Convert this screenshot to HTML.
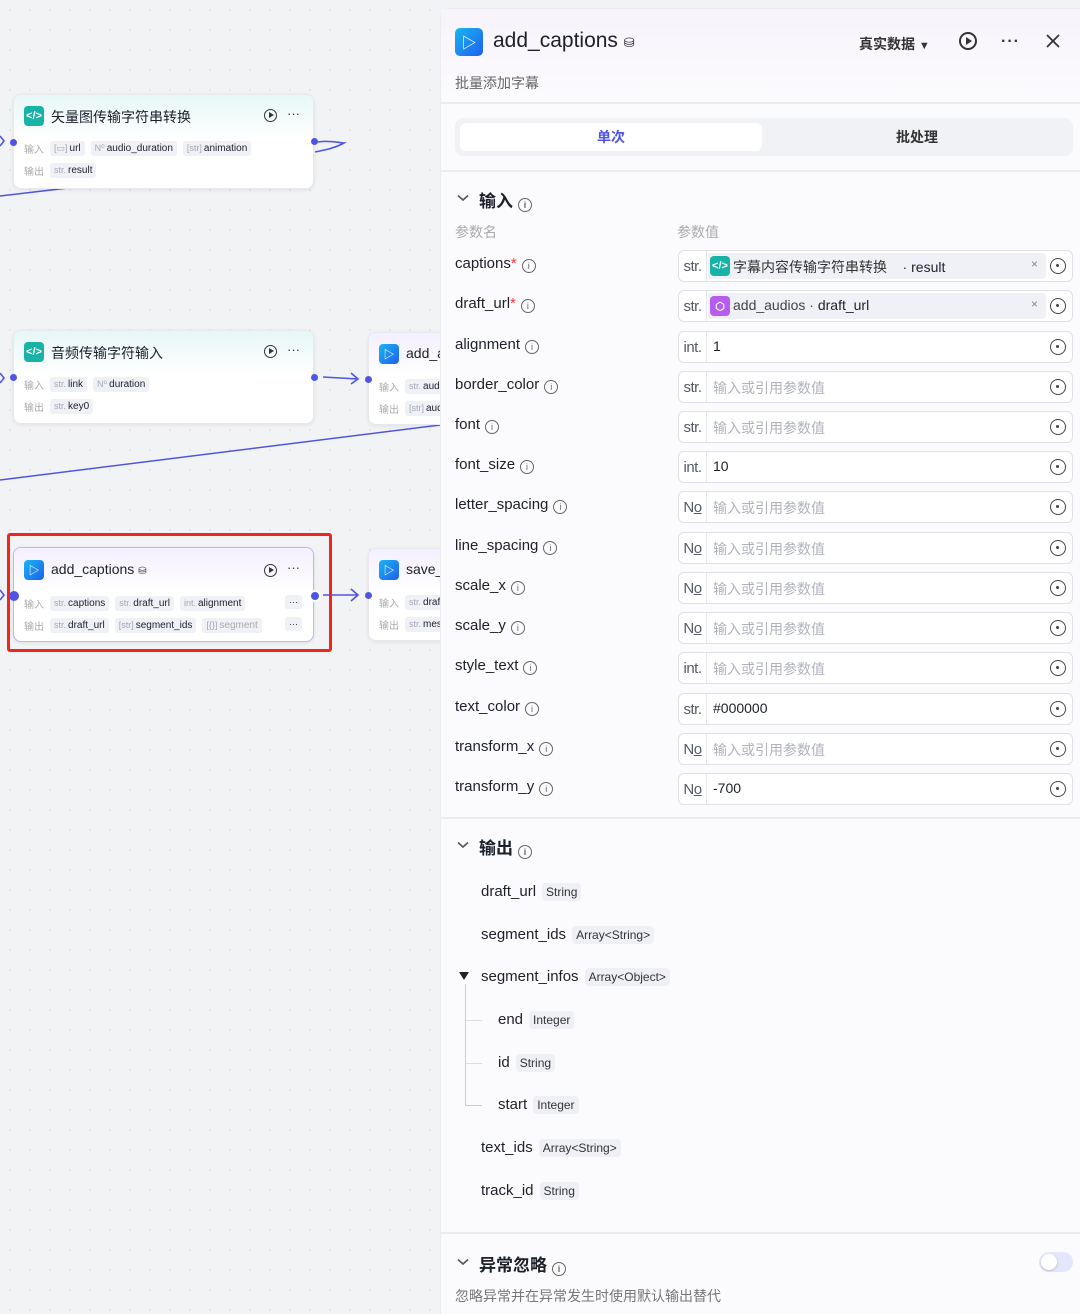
<!DOCTYPE html>
<html><head><meta charset="utf-8">
<style>
*{box-sizing:border-box;margin:0;padding:0}
body{width:1080px;height:1314px;overflow:hidden;position:relative;background:#f2f3f5;font-family:"Liberation Sans","Noto Sans CJK SC",sans-serif;color:#1d1f2b}
.cv{position:absolute;left:0;top:0;width:440px;height:1314px;background-color:#f2f3f5;background-image:radial-gradient(#e3e4e8 1px,transparent 1.2px);background-size:20px 20px}
.node{position:absolute;background:#fff;border-radius:8px;box-shadow:0 1px 4px rgba(0,0,0,.08);border:1px solid #e8e9ef;overflow:hidden}
.node .hd{height:44px;background:linear-gradient(180deg,#e6f7f6 0%,#fff 100%);position:relative}
.node.blue .hd{background:linear-gradient(180deg,#f4efff 0%,#fff 100%)}
.ic{position:absolute;width:20px;height:20px;border-radius:4px;display:flex;align-items:center;justify-content:center;color:#fff;font-size:11px;font-weight:bold}
.ic.g{background:#16b3a6}
.ic.b{background:linear-gradient(135deg,#19b6ef,#1f5ff0)}
.ttl{position:absolute;left:37px;top:12px;font-size:14px;color:#1d1f2b}
.r{position:absolute;font-size:10px;color:#aaa;display:flex;gap:6px;align-items:center}
.tag{background:#f0f1f6;border-radius:3px;padding:2px 4px;color:#1d1f2b;font-size:10px}
.tag i{font-style:normal;color:#a3a6b4;font-size:9px;margin-right:2px}
.pl{position:absolute;top:14px;width:13px;height:13px;border:1.5px solid #333;border-radius:50%}
.pl:after{content:"";position:absolute;left:3.5px;top:2px;border-left:5px solid #333;border-top:3.5px solid transparent;border-bottom:3.5px solid transparent}
.act{position:absolute;top:11px;font-size:13px;color:#333}
.dot{position:absolute;width:7px;height:7px;border-radius:50%;background:#4e55e6}
.panel{position:absolute;left:440px;top:8px;width:640px;height:1306px;background:#fbfbfd;border-radius:10px 0 0 0;border-left:1px solid #ebecf0;border-top:1px solid #ebecf0}
.pt{position:absolute;left:0;top:0;width:640px;height:95px;background:linear-gradient(180deg,#f8f3fc,#fbfbfd)}
.a{position:absolute}
.lbl{position:absolute;left:14px;font-size:15px;color:#1d1f2b}
.info{display:inline-block;width:14px;height:14px;border:1.2px solid #666;border-radius:50%;font-size:9px;line-height:12px;text-align:center;color:#666;vertical-align:-1px;margin-left:5px;font-style:normal}
.box{position:absolute;left:237px;width:395px;height:32px;border:1px solid #dfe0e8;border-radius:6px;background:#fff}
.box .t{position:absolute;left:0;top:0;width:28px;height:30px;border-right:1px solid #e6e7ee;font-size:15px;color:#555a66;display:flex;align-items:center;justify-content:center;letter-spacing:-.5px}
.box .v{position:absolute;left:34px;top:6px;font-size:14px;color:#1d1f2b}
.box .v.ph{color:#b0b3bd}
.box .tg{position:absolute;right:6px;top:7px;width:16px;height:16px;border:1.6px solid #444;border-radius:50%}
.box .tg:after{content:"";position:absolute;left:5px;top:5px;width:3px;height:3px;background:#444;border-radius:50%}
.ref{position:absolute;left:29px;top:2px;width:338px;height:26px;background:#f0f1f6;border-radius:4px}
.ol{position:absolute;font-size:15px;color:#1d1f2b}
.ol span{font-size:12px;background:#eef0f5;border-radius:4px;padding:2px 4px;margin-left:6px;color:#333}
.sep{position:absolute;left:0;width:640px;height:2px;background:#ebebf1}
.chev{position:absolute;left:16px}
</style></head><body>
<div class="cv"></div>
<svg class="a" style="left:0;top:0" width="440" height="700">
<g fill="none" stroke="#4e55e6" stroke-width="1.6">
<path d="M0 196 L68 188"/>
<path d="M318 142 C330 140 340 143 344 143 C335 148 325 150 315 152"/>
<path d="M0 480 L440 425"/>
<path d="M323 377 L358 379 M351 373 L358 379 L351 384"/>
<path d="M323 595 L358 595 M351 589 L358 595 L351 601"/>
<path d="M0 136 L4 141 L0 146 M0 373 L4 378 L0 383 M0 590 L4 595 L0 600"/>
</g></svg>
<!-- node1 -->
<div class="node" style="left:13px;top:94px;width:301px;height:95px">
<div class="hd"><div class="ic g" style="left:10px;top:11px">&lt;/&gt;</div><div class="ttl">矢量图传输字符串转换</div>
<div class="pl" style="left:250px"></div><div class="act" style="left:273px">···</div></div>
<div class="r" style="left:10px;top:46px">输入 <span class="tag"><i>[▭]</i>url</span><span class="tag"><i>N⁰</i>audio_duration</span><span class="tag"><i>[str]</i>animation</span></div>
<div class="r" style="left:10px;top:68px">输出 <span class="tag"><i>str.</i>result</span></div>
</div>
<div class="dot" style="left:10px;top:139px"></div><div class="dot" style="left:311px;top:138px"></div>
<!-- node2 -->
<div class="node" style="left:13px;top:330px;width:301px;height:94px">
<div class="hd"><div class="ic g" style="left:10px;top:11px">&lt;/&gt;</div><div class="ttl">音频传输字符输入</div>
<div class="pl" style="left:250px"></div><div class="act" style="left:273px">···</div></div>
<div class="r" style="left:10px;top:46px">输入 <span class="tag"><i>str.</i>link</span><span class="tag"><i>N⁰</i>duration</span></div>
<div class="r" style="left:10px;top:68px">输出 <span class="tag"><i>str.</i>key0</span></div>
</div>
<div class="dot" style="left:10px;top:374px"></div><div class="dot" style="left:311px;top:374px"></div>
<!-- node3 -->
<div class="node blue" style="left:368px;top:332px;width:90px;height:93px">
<div class="hd"><div class="ic b" style="left:10px;top:11px">▷</div><div class="ttl" style="top:12px">add_a</div></div>
<div class="r" style="left:10px;top:46px">输入 <span class="tag"><i>str.</i>aud</span></div>
<div class="r" style="left:10px;top:68px">输出 <span class="tag"><i>[str]</i>aud</span></div>
</div>
<div class="dot" style="left:365px;top:376px"></div>
<!-- node4 -->
<div style="position:absolute;left:7px;top:533px;width:325px;height:119px;border:3px solid #f0261e;border-radius:3px"></div>
<div class="node blue" style="left:13px;top:547px;width:301px;height:95px;border:1px solid #b5b8f5">
<div class="hd"><div class="ic b" style="left:10px;top:12px">▷</div><div class="ttl" style="top:13px">add_captions <span style="font-size:10px">⛁</span></div>
<div class="pl" style="left:250px;top:16px"></div><div class="act" style="left:273px;top:12px">···</div></div>
<div class="r" style="left:10px;top:48px">输入 <span class="tag"><i>str.</i>captions</span><span class="tag"><i>str.</i>draft_url</span><span class="tag"><i>int.</i>alignment</span></div>
<div class="r" style="left:10px;top:70px">输出 <span class="tag"><i>str.</i>draft_url</span><span class="tag"><i>[str]</i>segment_ids</span><span class="tag" style="color:#aaa"><i>[{}]</i>segment</span></div>
<div class="tag a" style="left:271px;top:47px;font-size:9px">···</div><div class="tag a" style="left:271px;top:69px;font-size:9px">···</div>
</div>
<div class="dot" style="left:9px;top:591px;width:10px;height:10px"></div><div class="dot" style="left:309px;top:590px;width:12px;height:12px;border:2px solid #fff"></div>
<!-- node5 -->
<div class="node blue" style="left:368px;top:548px;width:90px;height:93px">
<div class="hd"><div class="ic b" style="left:10px;top:11px">▷</div><div class="ttl" style="top:12px">save_</div></div>
<div class="r" style="left:10px;top:46px">输入 <span class="tag"><i>str.</i>draf</span></div>
<div class="r" style="left:10px;top:68px">输出 <span class="tag"><i>str.</i>mes</span></div>
</div>
<div class="dot" style="left:365px;top:592px"></div>

<div class="panel">
<div class="pt"></div>
<div class="ic b" style="left:14px;top:19px;width:28px;height:28px;border-radius:5px;font-size:15px">▷</div>
<div class="a" style="left:52px;top:20px;font-size:21px;color:#1d1f2b">add_captions <span style="font-size:13px">⛁</span></div>
<div class="a" style="left:418px;top:25px;font-size:14px;font-weight:bold;color:#333">真实数据 <span style="font-size:11px">▼</span></div>
<div class="a" style="left:518px;top:23px;width:18px;height:18px;border:2px solid #333;border-radius:50%"><div style="position:absolute;left:5px;top:3px;border-left:6px solid #333;border-top:4px solid transparent;border-bottom:4px solid transparent"></div></div>
<div class="a" style="left:560px;top:24px;font-size:16px;color:#333;letter-spacing:1px;font-weight:bold">···</div>
<svg class="a" style="left:605px;top:25px" width="14" height="14"><path d="M1 1L13 13M13 1L1 13" stroke="#333" stroke-width="1.8"/></svg>
<div class="a" style="left:14px;top:64px;font-size:14px;color:#666">批量添加字幕</div>
<div class="sep" style="top:93px"></div>
<div class="a" style="left:14px;top:109px;width:618px;height:38px;background:#f1f2f5;border-radius:8px"></div>
<div class="a" style="left:19px;top:114px;width:302px;height:28px;background:#fff;border-radius:6px;text-align:center;line-height:28px;font-size:14px;color:#4d53e8;font-weight:bold">单次</div>
<div class="a" style="left:324px;top:114px;width:304px;height:28px;text-align:center;line-height:28px;font-size:14px;color:#333;font-weight:bold">批处理</div>
<div class="sep" style="top:161px"></div>
<svg class="chev" style="top:185px" width="12" height="8"><path d="M1 1.5L6 6L11 1.5" fill="none" stroke="#555" stroke-width="1.6"/></svg>
<div class="a" style="left:38px;top:178px;font-size:17px;font-weight:bold">输入<i class="info">i</i></div>
<div class="a" style="left:14px;top:213px;font-size:14px;color:#aaa">参数名</div>
<div class="a" style="left:236px;top:213px;font-size:14px;color:#aaa">参数值</div>

<div class="lbl" style="top:246px">captions<span style="color:#f33">*</span><i class="info">i</i></div>
<div class="box" style="top:241px"><div class="t">str.</div><div class="ref"><div class="ic g" style="left:2px;top:3px">&lt;/&gt;</div><div class="a" style="left:25px;top:4px;font-size:14px;color:#333">字幕内容传输字符串转换 &nbsp;&nbsp;&nbsp;· <span style="color:#1d1f2b">result</span></div><div class="a" style="right:8px;top:4px;font-size:12px;color:#888">×</div></div><div class="tg"></div></div>
<div class="lbl" style="top:286px">draft_url<span style="color:#f33">*</span><i class="info">i</i></div>
<div class="box" style="top:281px"><div class="t">str.</div><div class="ref"><div class="ic" style="left:2px;top:3px;background:#b65cf0">⬡</div><div class="a" style="left:25px;top:4px;font-size:14px;color:#444">add_audios · <span style="color:#1d1f2b">draft_url</span></div><div class="a" style="right:8px;top:4px;font-size:12px;color:#888">×</div></div><div class="tg"></div></div>

<div class="lbl" style="top:327px">alignment<i class="info">i</i></div>
<div class="box" style="top:322px"><div class="t">int.</div><div class="v">1</div><div class="tg"></div></div>
<div class="lbl" style="top:367px">border_color<i class="info">i</i></div>
<div class="box" style="top:362px"><div class="t">str.</div><div class="v ph">输入或引用参数值</div><div class="tg"></div></div>
<div class="lbl" style="top:407px">font<i class="info">i</i></div>
<div class="box" style="top:402px"><div class="t">str.</div><div class="v ph">输入或引用参数值</div><div class="tg"></div></div>
<div class="lbl" style="top:447px">font_size<i class="info">i</i></div>
<div class="box" style="top:442px"><div class="t">int.</div><div class="v">10</div><div class="tg"></div></div>
<div class="lbl" style="top:487px">letter_spacing<i class="info">i</i></div>
<div class="box" style="top:482px"><div class="t">N<u>o</u></div><div class="v ph">输入或引用参数值</div><div class="tg"></div></div>
<div class="lbl" style="top:528px">line_spacing<i class="info">i</i></div>
<div class="box" style="top:523px"><div class="t">N<u>o</u></div><div class="v ph">输入或引用参数值</div><div class="tg"></div></div>
<div class="lbl" style="top:568px">scale_x<i class="info">i</i></div>
<div class="box" style="top:563px"><div class="t">N<u>o</u></div><div class="v ph">输入或引用参数值</div><div class="tg"></div></div>
<div class="lbl" style="top:608px">scale_y<i class="info">i</i></div>
<div class="box" style="top:603px"><div class="t">N<u>o</u></div><div class="v ph">输入或引用参数值</div><div class="tg"></div></div>
<div class="lbl" style="top:648px">style_text<i class="info">i</i></div>
<div class="box" style="top:643px"><div class="t">int.</div><div class="v ph">输入或引用参数值</div><div class="tg"></div></div>
<div class="lbl" style="top:689px">text_color<i class="info">i</i></div>
<div class="box" style="top:684px"><div class="t">str.</div><div class="v">#000000</div><div class="tg"></div></div>
<div class="lbl" style="top:729px">transform_x<i class="info">i</i></div>
<div class="box" style="top:724px"><div class="t">N<u>o</u></div><div class="v ph">输入或引用参数值</div><div class="tg"></div></div>
<div class="lbl" style="top:769px">transform_y<i class="info">i</i></div>
<div class="box" style="top:764px"><div class="t">N<u>o</u></div><div class="v">-700</div><div class="tg"></div></div>

<div class="sep" style="top:808px"></div>
<svg class="chev" style="top:832px" width="12" height="8"><path d="M1 1.5L6 6L11 1.5" fill="none" stroke="#555" stroke-width="1.6"/></svg>
<div class="a" style="left:38px;top:825px;font-size:17px;font-weight:bold">输出<i class="info">i</i></div>
<div class="ol" style="left:40px;top:874px">draft_url<span>String</span></div>
<div class="ol" style="left:40px;top:917px">segment_ids<span>Array&lt;String&gt;</span></div>
<div class="a" style="left:18px;top:963px;border-top:8px solid #222;border-left:5px solid transparent;border-right:5px solid transparent"></div>
<div class="ol" style="left:40px;top:959px">segment_infos<span>Array&lt;Object&gt;</span></div>
<div class="a" style="left:24px;top:975px;width:17px;height:122px;border-left:1px solid #ccc;border-bottom:1px solid #ccc"></div>
<div class="a" style="left:25px;top:1011px;width:16px;border-top:1px solid #ddd"></div>
<div class="a" style="left:25px;top:1054px;width:16px;border-top:1px solid #ddd"></div>
<div class="ol" style="left:57px;top:1002px">end<span>Integer</span></div>
<div class="ol" style="left:57px;top:1045px">id<span>String</span></div>
<div class="ol" style="left:57px;top:1087px">start<span>Integer</span></div>
<div class="ol" style="left:40px;top:1130px">text_ids<span>Array&lt;String&gt;</span></div>
<div class="ol" style="left:40px;top:1173px">track_id<span>String</span></div>
<div class="sep" style="top:1223px"></div>
<svg class="chev" style="top:1249px" width="12" height="8"><path d="M1 1.5L6 6L11 1.5" fill="none" stroke="#555" stroke-width="1.6"/></svg>
<div class="a" style="left:38px;top:1242px;font-size:17px;font-weight:bold">异常忽略<i class="info">i</i></div>
<div class="a" style="left:598px;top:1243px;width:34px;height:20px;border-radius:10px;background:#e4e6fb"><div style="position:absolute;left:2px;top:2px;width:16px;height:16px;border-radius:50%;background:#fff;box-shadow:0 1px 2px rgba(0,0,0,.2)"></div></div>
<div class="a" style="left:14px;top:1277px;font-size:14px;color:#777">忽略异常并在异常发生时使用默认输出替代</div>
</div>
</body></html>
